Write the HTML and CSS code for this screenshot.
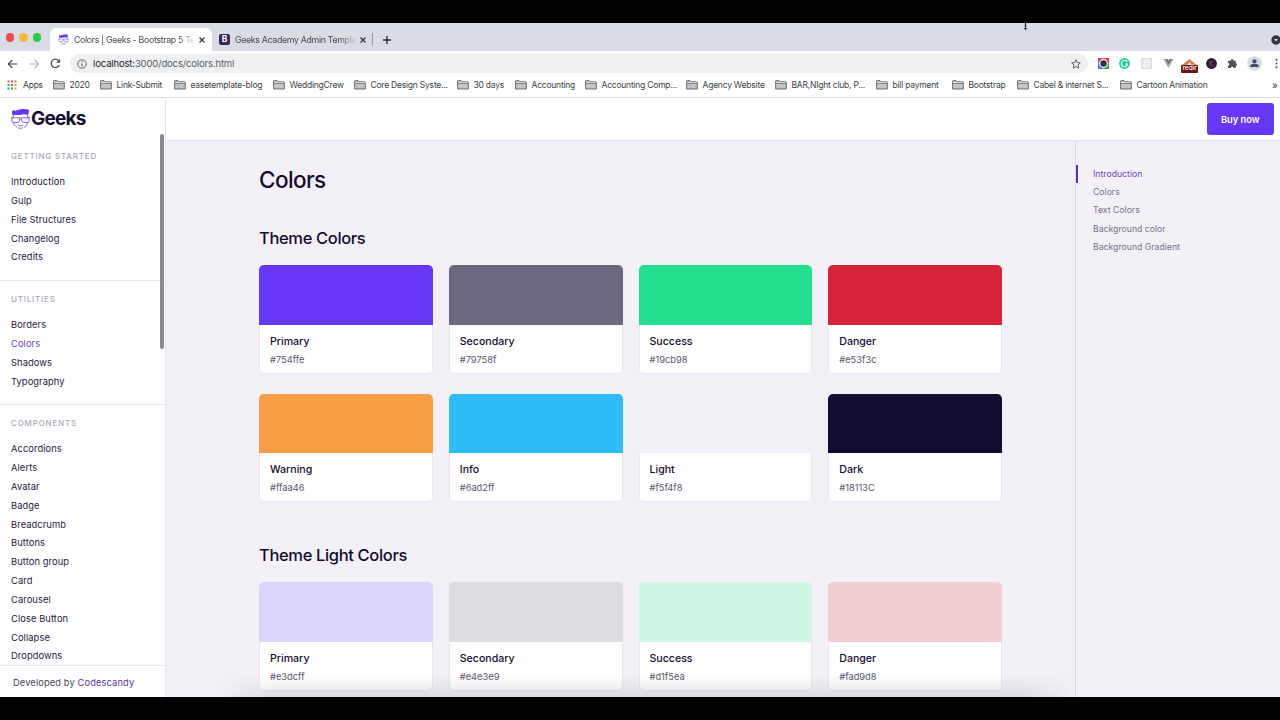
FILE: index.html
```
<!DOCTYPE html>
<html lang="en">
<head>
	<meta charset="UTF-8">
	<meta name="viewport" content="width=device-width">
	<title>Colors | Geeks - Bootstrap 5 Template</title>

	<link rel="stylesheet" href="styles.css">
</head>

<body>

<svg class="defs" width="0" height="0">
	<symbol id="folder" viewBox="0 0 12 10">
		<path d="M.6 9V1.2Q.6.6 1.2.6H4l1.2 1.2h5.4q.7 0 .7.7V9z" fill="#c4c4c4" stroke="#606060" stroke-width=".9"/>
		<path d="M1 3.4h10" stroke="#606060" stroke-width=".8"/>
		<path d="M1.2 2.6h9.6" stroke="#f1f1f1" stroke-width=".7"/>
	</symbol>
	<symbol id="geek" viewBox="0 0 19 21">
		<path d="M1.3 6.8C.4 4.600 1 2.800 2.500 1.900c.7 1 1.600 1 2.800.5C8 1.200 13.500.2 17.700 1.600c.5 1.500.2 3.400-.9 5.200-1.300.4-2.300-.5-3.800-.5-2.900 0-3.400.9-6.500.8-2.300-.1-3.500-.6-5.200-.3z" fill="#6637f4"/>
		<path d="M2.300 6.500v3M16.700 6.300v3.200M.6 9.800h17.800M.8 9.800c-.2 2.500 0 4.600 1.200 4.600h4.800c1.400 0 1.700-1.800 1.700-3.400M18.200 9.800c.2 2.500 0 4.600-1.200 4.600h-4.600c-1.400 0-1.800-1.800-1.800-3.400M8.500 11.400q1-.8 2.100 0M2.600 14.800c.6 2.300 1.700 3.600 3.200 4.300M16.500 14.800c-.6 2.300-1.700 3.600-3.200 4.300M7.300 17.300q2.200 1.300 4.500 0M7.500 20q2 .8 4 0" fill="none" stroke="#7b5be0" stroke-width=".95" stroke-linecap="round"/>
	</symbol>
	<symbol id="close" viewBox="0 0 8 8">
		<path d="M1.500 1.500l5 5M6.500 1.500l-5 5" stroke="#303236" stroke-width="1.200"/>
	</symbol>
</svg>

<div class="browser">

	<div class="tab-strip">
		<div class="lights"><i class="red"></i><i class="yellow"></i><i class="green"></i></div>
		<div class="tab active">
			<svg class="favicon" width="11" height="11"><use href="#geek"/></svg>
			<span class="tab-title">Colors | Geeks - Bootstrap 5 Te</span>
			<svg width="8" height="8"><use href="#close"/></svg>
		</div>
		<div class="tab">
			<span class="b-icon">B</span>
			<span class="tab-title">Geeks Academy Admin Templa</span>
			<svg width="8" height="8"><use href="#close"/></svg>
		</div>
		<i class="tab-divider"></i>
		<svg class="new-tab" width="10" height="10" viewBox="0 0 10 10"><path d="M5 1v8M1 5h8" stroke="#26282c" stroke-width="1.300"/></svg>
		<svg class="cursor" width="7" height="8" viewBox="0 0 7 8"><path d="M3.500 0v5" stroke="#111" stroke-width="1.200"/><path d="M1 4.500h5L3.500 7.500z" fill="#222" stroke="#fff" stroke-width=".5"/></svg>
		<svg class="tab-search" width="10" height="10" viewBox="0 0 10 10"><circle cx="5" cy="5" r="4.700" fill="#303237"/><path d="M3 4h4L5 6.500z" fill="#d9dce4"/></svg>
	</div>

	<div class="toolbar">
		<svg class="nav-icon" width="11" height="10" viewBox="0 0 11 10"><path d="M10.500 5H1.500M5.300 1L1.300 5l4 4" fill="none" stroke="#4b4d51" stroke-width="1.200"/></svg>
		<svg class="nav-icon" width="11" height="10" viewBox="0 0 11 10"><path d="M.5 5h9M5.700 1l4 4-4 4" fill="none" stroke="#b0b2b5" stroke-width="1.100"/></svg>
		<svg class="nav-icon" width="11" height="11" viewBox="0 0 11 11"><path d="M9.300 7.100A4.200 4.200 0 1 1 8.600 2.600" fill="none" stroke="#4b4d51" stroke-width="1.300"/><path d="M10.100.7v4H6.200z" fill="#4b4d51"/></svg>
		<div class="address">
			<svg width="10" height="10" viewBox="0 0 10 10"><circle cx="5" cy="5" r="4.200" fill="none" stroke="#55585c" stroke-width=".9"/><path d="M5 4.400v3M5 2.400v1.100" stroke="#55585c" stroke-width="1.100"/></svg>
			<span class="url"><b>localhost:</b>3000/docs/colors.html</span>
			<svg class="star" width="10" height="10" viewBox="0 0 10 10"><path d="M5 .7l1.200 2.900 3.200.3-2.400 2 .8 3.200L5 7.500 2.200 9.100 3 5.900l-2.400-2 3.200-.3z" fill="none" stroke="#505256" stroke-width=".9"/></svg>
		</div>
		<div class="extensions">
			<svg width="11" height="11" viewBox="0 0 11 11"><path d="M0 0h5.500v5.500H0z" fill="#ce4094"/><path d="M5.500 0H11v5.500H5.500z" fill="#e13e45"/><path d="M5.500 5.500H11V11H5.500z" fill="#33a95d"/><path d="M0 5.500h5.500V11H0z" fill="#4d79db"/><circle cx="5.500" cy="5.500" r="4.400" fill="#fff"/><circle cx="5.500" cy="5.500" r="3.200" fill="#2e3042"/></svg>
			<svg width="11" height="11" viewBox="0 0 11 11"><circle cx="5.500" cy="5.500" r="5.400" fill="#1fce99"/><path d="M8.300 3.800A3.200 3.200 0 1 0 8.200 7.400V6H6.300" fill="none" stroke="#fff" stroke-width="1.100"/></svg>
			<svg width="11" height="11" viewBox="0 0 11 11"><path d="M0 0h11v11H0z" fill="#dfdfdf"/><g fill="none" stroke="#fff" stroke-width=".7"><ellipse cx="5.500" cy="5.500" rx="4.500" ry="1.800"/><ellipse cx="5.500" cy="5.500" rx="4.500" ry="1.800" transform="rotate(60 5.500 5.500)"/><ellipse cx="5.500" cy="5.500" rx="4.500" ry="1.800" transform="rotate(120 5.500 5.500)"/></g></svg>
			<svg width="11" height="11" viewBox="0 0 11 11"><path d="M.3 1h2.900l2.300 4 2.300-4h2.900L5.500 10z" fill="#a7a7a7"/><path d="M2.500 1h2l1 1.800 1-1.800h2l-3 5.200z" fill="#6c6c6c"/></svg>
			<div class="redir">
				<svg width="15" height="6" viewBox="0 0 15 6"><path d="M0 6l7.500-6L15 6z" fill="#d98052"/><path d="M5.500 6l2-2.800 2 2.800z" fill="#fff"/></svg>
				<span>redir</span>
			</div>
			<svg width="11" height="11" viewBox="0 0 11 11"><circle cx="5.500" cy="5.500" r="5.400" fill="#26222f"/><path d="M4 2.800v5.400M7.300 2.800L4.200 5.500l3.100 2.700" fill="none" stroke="#8e2f55" stroke-width="1.100"/></svg>
			<svg width="11" height="11" viewBox="0 0 11 11"><path d="M1 2.700h2.700a1.400 1.400 0 1 1 2.800 0h2.300v2.500a1.300 1.300 0 1 1 0 2.600V10H6.500a1.350 1.350 0 0 0-2.700 0H1V7.600a1.300 1.300 0 0 0 0-2.600z" fill="#505256"/></svg>
			<svg class="avatar" width="15" height="15" viewBox="0 0 15 15"><circle cx="7.500" cy="7.500" r="7.300" fill="#d6dae3"/><circle cx="7.500" cy="5.300" r="2.100" fill="#454b5c"/><path d="M3.300 11V10c0-1.600 2-2.300 4.200-2.300s4.200.7 4.200 2.300v1z" fill="#454b5c"/></svg>
			<svg class="dots" width="3" height="11" viewBox="0 0 3 11"><g fill="#4b4d51"><circle cx="1.500" cy="1.800" r="1"/><circle cx="1.500" cy="5.500" r="1"/><circle cx="1.500" cy="9.200" r="1"/></g></svg>
		</div>
	</div>

	<div class="bookmarks">
		<span><svg class="apps" width="10" height="10" viewBox="0 0 10 10"><path d="M.5.5h2v2h-2zM4 .5h2v2H4z" fill="#d4534a"/><path d="M7.500.5h2v2h-2z" fill="#c47340"/><path d="M.5 4h2v2h-2z" fill="#3fa560"/><path d="M4 4h2v2H4z" fill="#4683da"/><path d="M7.500 4h2v2h-2z" fill="#d9a536"/><path d="M.5 7.500h2v2h-2zM4 7.500h2v2H4z" fill="#3f9c5c"/><path d="M7.500 7.500h2v2h-2z" fill="#d9a536"/></svg>Apps</span>
		<span><svg width="12" height="10"><use href="#folder"/></svg>2020</span>
		<span><svg width="12" height="10"><use href="#folder"/></svg>Link-Submit</span>
		<span><svg width="12" height="10"><use href="#folder"/></svg>easetemplate-blog</span>
		<span><svg width="12" height="10"><use href="#folder"/></svg>WeddingCrew</span>
		<span><svg width="12" height="10"><use href="#folder"/></svg>Core Design Syste...</span>
		<span><svg width="12" height="10"><use href="#folder"/></svg>30 days</span>
		<span><svg width="12" height="10"><use href="#folder"/></svg>Accounting</span>
		<span><svg width="12" height="10"><use href="#folder"/></svg>Accounting Comp...</span>
		<span><svg width="12" height="10"><use href="#folder"/></svg>Agency Website</span>
		<span><svg width="12" height="10"><use href="#folder"/></svg>BAR,NIght club, P...</span>
		<span><svg width="12" height="10"><use href="#folder"/></svg>bill payment</span>
		<span><svg width="12" height="10"><use href="#folder"/></svg>Bootstrap</span>
		<span><svg width="12" height="10"><use href="#folder"/></svg>Cabel &amp; internet S...</span>
		<span><svg width="12" height="10"><use href="#folder"/></svg>Cartoon Animation</span>
		<span class="more">»</span>
	</div>

	<div class="page">

		<aside class="sidebar">
			<a class="logo" href="#"><svg width="19" height="21"><use href="#geek"/></svg>Geeks</a>
			<nav class="side-nav">
				<section>
					<h6>Getting Started</h6>
					<a href="#">Introduction</a>
					<a href="#">Gulp</a>
					<a href="#">File Structures</a>
					<a href="#">Changelog</a>
					<a href="#">Credits</a>
				</section>
				<section>
					<h6>Utilities</h6>
					<a href="#">Borders</a>
					<a href="#" class="active">Colors</a>
					<a href="#">Shadows</a>
					<a href="#">Typography</a>
				</section>
				<section>
					<h6>Components</h6>
					<a href="#">Accordions</a>
					<a href="#">Alerts</a>
					<a href="#">Avatar</a>
					<a href="#">Badge</a>
					<a href="#">Breadcrumb</a>
					<a href="#">Buttons</a>
					<a href="#">Button group</a>
					<a href="#">Card</a>
					<a href="#">Carousel</a>
					<a href="#">Close Button</a>
					<a href="#">Collapse</a>
					<a href="#">Dropdowns</a>
				</section>
				<div class="scrollbar"></div>
			</nav>
			<div class="credit">Developed by <a href="#">Codescandy</a></div>
		</aside>

		<div class="main">
			<header><a class="btn" href="#">Buy now</a></header>
			<div class="columns">
				<main>
					<h1>Colors</h1>

					<h2>Theme Colors</h2>
					<div class="cards">
						<div class="card"><div class="swatch primary"></div><h4>Primary</h4><p>#754ffe</p></div>
						<div class="card"><div class="swatch secondary"></div><h4>Secondary</h4><p>#79758f</p></div>
						<div class="card"><div class="swatch success"></div><h4>Success</h4><p>#19cb98</p></div>
						<div class="card"><div class="swatch danger"></div><h4>Danger</h4><p>#e53f3c</p></div>
						<div class="card"><div class="swatch warning"></div><h4>Warning</h4><p>#ffaa46</p></div>
						<div class="card"><div class="swatch info"></div><h4>Info</h4><p>#6ad2ff</p></div>
						<div class="card"><div class="swatch light"></div><h4>Light</h4><p>#f5f4f8</p></div>
						<div class="card"><div class="swatch dark"></div><h4>Dark</h4><p>#18113C</p></div>
					</div>

					<h2>Theme Light Colors</h2>
					<div class="cards">
						<div class="card"><div class="swatch light-primary"></div><h4>Primary</h4><p>#e3dcff</p></div>
						<div class="card"><div class="swatch light-secondary"></div><h4>Secondary</h4><p>#e4e3e9</p></div>
						<div class="card"><div class="swatch light-success"></div><h4>Success</h4><p>#d1f5ea</p></div>
						<div class="card"><div class="swatch light-danger"></div><h4>Danger</h4><p>#fad9d8</p></div>
					</div>
				</main>
				<nav class="toc">
					<a href="#" class="active">Introduction</a>
					<a href="#">Colors</a>
					<a href="#">Text Colors</a>
					<a href="#">Background color</a>
					<a href="#">Background Gradient</a>
				</nav>
			</div>
			<div class="dock-shadow"></div>
		</div>

	</div>
</div>

</body>
</html>
```
FILE: styles.css
```
* { box-sizing: border-box; }

body {
	margin: 0;
	padding: 23px 0;
	height: 720px;
	background: #000;
	font-family: Inter, "Liberation Sans", sans-serif;
	overflow: hidden;
}

a { text-decoration: none; color: inherit; }
svg { display: block; flex: none; }
h1, h2, h4, h6, p { margin: 0; }

.defs { position: absolute; }

.browser {
	height: 674px;
	display: flex;
	flex-direction: column;
	background: #fff;
	overflow: hidden;
}

/* tabs */
.tab-strip {
	position: relative;
	flex: none;
	height: 28px;
	padding-top: 5px;
	display: flex;
	background: #d9dce4;
}

.lights {
	width: 50px;
	padding: 5px 0 0 5.500px;
	display: flex;
	gap: 5px;
}
.lights i { width: 8.500px; height: 8.500px; border-radius: 50%; }
.red { background: #ee4b52; }
.yellow { background: #f5b63c; }
.green { background: #2bcb48; }

.tab {
	width: 160px;
	padding: 0 7px 0 7px;
	display: flex;
	align-items: center;
	font-size: 8.800px;
	letter-spacing: -.33px;
	color: #46494e;
}
.tab.active { background: #fff; border-radius: 6px 6px 0 0; width: 162px; padding-left: 8px; }
.tab-title {
	width: 121px;
	margin: 0 3px 0 5px;
	white-space: nowrap;
	-webkit-mask-image: linear-gradient(90deg, #000 104px, transparent 122px);
	mask-image: linear-gradient(90deg, #000 104px, transparent 122px);
}
.b-icon {
	flex: none;
	width: 11px;
	height: 11px;
	border-radius: 2px;
	background: #3b2560;
	color: #fff;
	font-size: 8.500px;
	font-weight: 700;
	letter-spacing: 0;
	line-height: 11px;
	text-align: center;
}
.tab-divider { width: 1px; height: 13px; margin-top: 5px; background: #9a9da5; }
.new-tab { margin: 7px 0 0 9px; }
.cursor { position: absolute; left: 1022px; top: 0; }
.tab-search { margin: 7px -1px 0 auto; }

/* toolbar */
.toolbar {
	flex: none;
	height: 25px;
	padding: 3px 2px 3px 7px;
	display: flex;
	align-items: center;
	gap: 10.700px;
}
.address {
	flex: none;
	width: 1018px;
	height: 19px;
	margin-left: -2px;
	padding: 0 7px 0 7px;
	border-radius: 10px;
	background: #eff0f2;
	display: flex;
	align-items: center;
	font-size: 9.500px;
	letter-spacing: -.15px;
	color: #585b60;
}
.url { margin-left: 6px; }
.url b { font-weight: 400; color: #222427; }
.star { margin-left: auto; }

.extensions {
	flex: 1;
	margin-left: -1px;
	display: flex;
	align-items: center;
	gap: 10.600px;
}
.redir { width: 17px; margin: 0 -3px; padding-top: 4px; }
.redir svg { margin: 0 auto; }
.redir span {
	display: block;
	height: 8px;
	border-radius: 1px;
	background: #6e1519;
	color: #fff;
	font-size: 6.500px;
	font-weight: 500;
	line-height: 7.500px;
	text-align: center;
}
.avatar { margin: 0 -2px; }
.dots { margin-left: auto; }

/* bookmarks */
.bookmarks {
	flex: none;
	height: 22px;
	padding-left: 7px;
	border-bottom: 1px solid #dcdde0;
	display: grid;
	grid-template-columns: 46px 47px 74px 99px 81px 103px 58px 70px 101px 89px 101px 76px 65px 103px 152px auto;
	font-size: 8.500px;
	letter-spacing: -.22px;
	color: #3c3f43;
}
.bookmarks span {
	display: flex;
	align-items: center;
	gap: 4.500px;
	padding-bottom: 4px;
	white-space: nowrap;
}
.bookmarks .apps { margin-right: 1.500px; }
.bookmarks .more { font-size: 10px; }

/* page */
.page {
	flex: 1;
	min-height: 0;
	display: flex;
}

.sidebar {
	width: 166px;
	flex: none;
	border-right: 1px solid #e4e4ea;
	display: flex;
	flex-direction: column;
}
.logo {
	height: 36px;
	padding: 4px 0 0 11px;
	display: flex;
	align-items: center;
	gap: 1px;
	font-size: 19px;
	font-weight: 700;
	letter-spacing: -.8px;
	color: #140c30;
}
.side-nav {
	position: relative;
	flex: 1;
	min-height: 0;
	overflow: hidden;
	font-size: 9.300px;
	letter-spacing: .1px;
}
.side-nav section {
	padding: 14px 11px 12.300px;
	border-bottom: 1px solid #e6e6eb;
}
.side-nav h6 {
	height: 16px;
	line-height: 16px;
	margin-bottom: 9px;
	font-size: 8px;
	font-weight: 500;
	letter-spacing: .8px;
	text-transform: uppercase;
	color: #aaa9b6;
}
.side-nav section + section { padding-top: 10.500px; }
.side-nav a {
	display: block;
	height: 18.850px;
	line-height: 18.850px;
	color: #252039;
}
.side-nav a.active { color: #6b45c2; }
.scrollbar {
	position: absolute;
	top: 0;
	right: 1px;
	width: 4.500px;
	height: 215px;
	border-radius: 3px;
	background: #8b8b8e;
}
.credit {
	flex: none;
	height: 32px;
	padding-left: 13px;
	border-top: 1px solid #e6e6eb;
	line-height: 34px;
	font-size: 9.300px;
	letter-spacing: .12px;
	color: #474457;
}
.credit a { color: #5b31b4; }

.main {
	position: relative;
	flex: 1;
	display: flex;
	flex-direction: column;
}
header {
	flex: none;
	height: 43px;
	padding: 5px 6px;
	border-bottom: 1px solid #e6e5ea;
	display: flex;
	justify-content: flex-end;
}
.btn {
	width: 67.500px;
	height: 32px;
	border-radius: 3px;
	background: #6637f4;
	color: #fff;
	font-size: 9.300px;
	font-weight: 600;
	line-height: 33px;
	text-align: center;
}
.columns {
	flex: 1;
	min-height: 0;
	display: flex;
	background: #f3f1f7;
}
main {
	flex: none;
	width: 909px;
	padding: 24px 73px 0 93px;
	overflow: hidden;
	color: #140c30;
}
h1 {
	height: 30px;
	line-height: 30px;
	font-size: 22.500px;
	font-weight: 450;
	letter-spacing: -.6px;
}
h2 {
	height: 24px;
	line-height: 24px;
	margin: 31px 0 15px;
	font-size: 16.500px;
	font-weight: 450;
	letter-spacing: -.35px;
}
.cards {
	display: grid;
	grid-template-columns: repeat(4, 1fr);
	gap: 20px 16px;
	margin-bottom: 41px;
}
.card {
	height: 108.500px;
	border-radius: 5px;
	background: #fff;
	box-shadow: inset 0 0 0 1px #e9e7ee;
	overflow: hidden;
}
.swatch { height: 59.500px; }
.card h4 {
	padding: 8px 11px 0;
	line-height: 17px;
	font-size: 10.600px;
	font-weight: 500;
}
.card p {
	padding: 2px 11px 0;
	line-height: 15px;
	font-size: 9.300px;
	color: #5a576b;
}

.primary { background: #6637f4; }
.secondary { background: #6d6780; }
.success { background: #24df8f; }
.danger { background: #d62339; }
.warning { background: #f79d44; }
.info { background: #2dbcf6; }
.light { background: #f3f1f7; }
.dark { background: #150d31; }
.light-primary { background: #ddd4fd; }
.light-secondary { background: #dddce2; }
.light-success { background: #cef8e4; }
.light-danger { background: #f5ced3; }

.toc {
	flex: 1;
	padding-top: 24px;
	border-left: 1px solid #dad8e1;
	font-size: 8.700px;
	color: #77738b;
}
.toc a {
	display: block;
	height: 18.200px;
	line-height: 18.200px;
	padding-left: 15px;
	border-left: 2px solid transparent;
}
.toc a.active { border-color: #5a2fb0; color: #6b45c2; }

/* soft shade along the bottom of the window */
.dock-shadow {
	position: absolute;
	left: 48px;
	right: 200px;
	bottom: 0;
	height: 22px;
	background: linear-gradient(transparent, rgba(60, 60, 65, .12));
	-webkit-mask-image: linear-gradient(90deg, transparent, #000 60px, #000 calc(100% - 60px), transparent);
	mask-image: linear-gradient(90deg, transparent, #000 60px, #000 calc(100% - 60px), transparent);
}
```
